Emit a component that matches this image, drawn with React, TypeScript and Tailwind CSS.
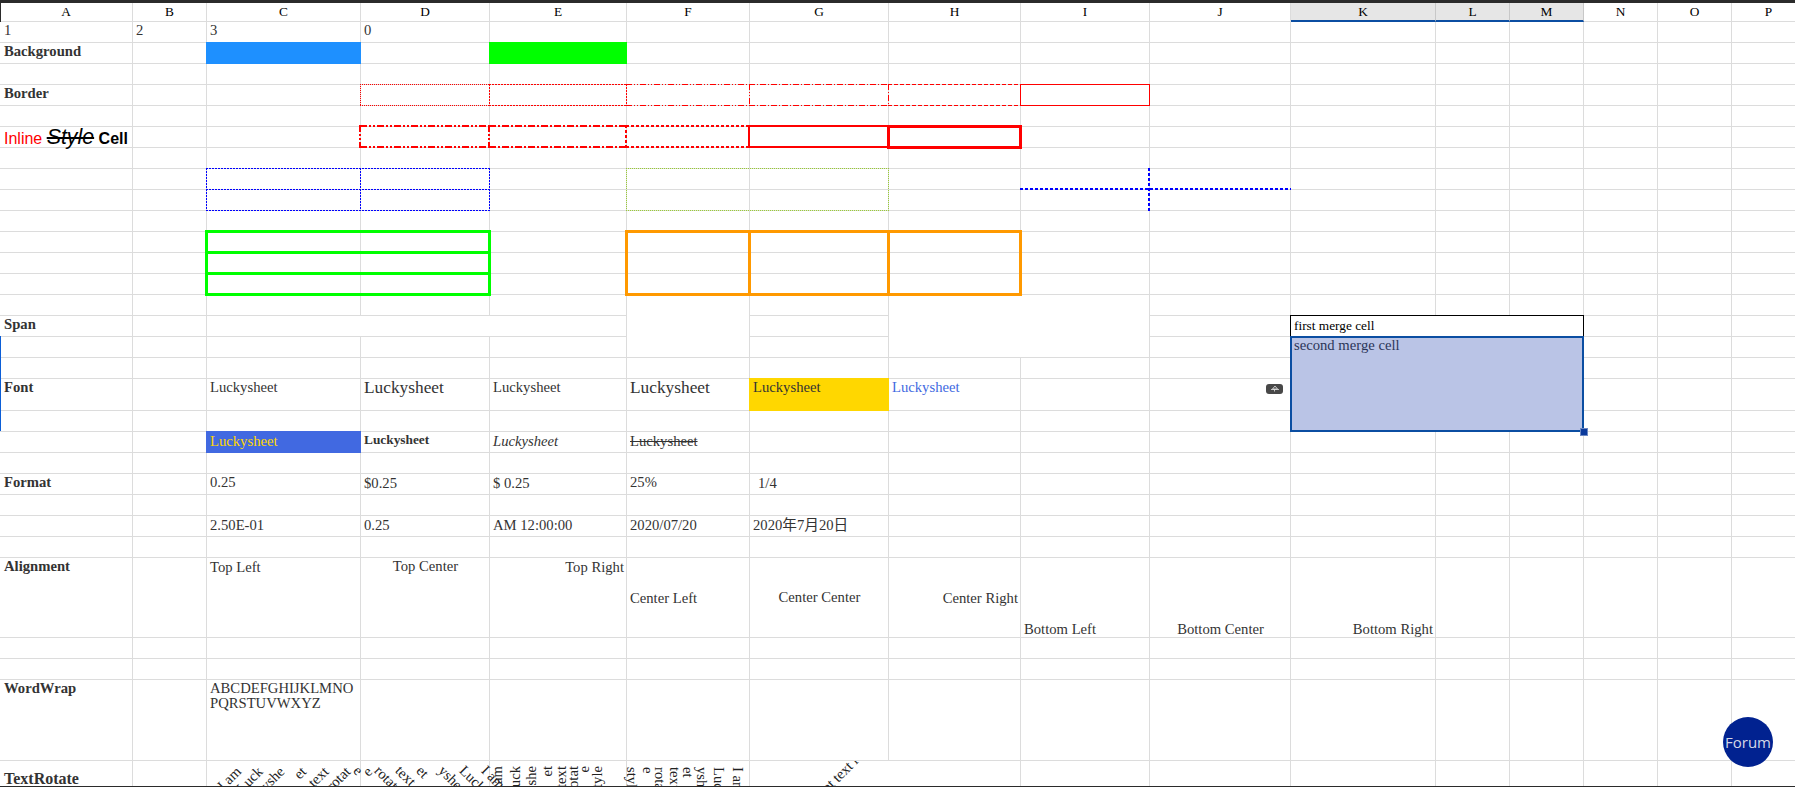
import type { ReactNode } from "react";

const columns = ["A", "B", "C", "D", "E", "F", "G", "H", "I", "J", "K", "L", "M", "N", "O", "P"];

type Cell = {
  text?: ReactNode;
  className?: string;
  fill?: string;
  span?: string;
  cols?: number;
  rowsDown?: number;
  bare?: boolean;
};

const Label = ({ children }: { children: ReactNode }) => <span className="font-bold">{children}</span>;

// rotated lines of the TextRotate row, placed by hand relative to their cell
const rotated = "absolute whitespace-nowrap leading-[16px] text-[#222]";

const cells: Record<string, Cell> = {
  A1: { text: "1" }, B1: { text: "2" }, C1: { text: "3" }, D1: { text: "0" },
  A2: { text: <Label>Background</Label> },
  C2: { fill: "bg-[#1e90ff]" },
  E2: { fill: "bg-[#00ff00]" },
  A4: { text: <Label>Border</Label> },
  A6: {
    className: "pt-[2px] font-['Liberation_Sans',sans-serif]",
    text: (
      <>
        <span className="text-[16px] text-[#ff0000]">Inline </span>
        <span className="text-[21.33px] italic text-black line-through">Style</span>
        <span className="text-[16px] font-bold text-black"> Cell</span>
      </>
    ),
  },
  A15: { text: <Label>Span</Label> },
  C15: { span: "col-span-3", cols: 3 },
  F14: { span: "row-span-3", rowsDown: 3 },
  H14: { span: "col-span-2 row-span-3", cols: 2, rowsDown: 3 },
  K15: { span: "col-span-3", cols: 3, className: "pt-[2px] text-[13.33px] text-black", text: "first merge cell" },
  K16: { span: "col-span-3 row-span-4", cols: 3, rowsDown: 4, text: "second merge cell" },
  A18: { text: <Label>Font</Label> },
  C18: { text: "Luckysheet" },
  D18: { className: "pt-[1px] text-[17.33px]", text: "Luckysheet" },
  E18: { text: "Luckysheet" },
  F18: { className: "pt-[1px] text-[17.33px]", text: "Luckysheet" },
  G18: { fill: "bg-[#ffd700]", text: "Luckysheet" },
  H18: { className: "text-[#4169e1]", text: "Luckysheet" },
  C20: { fill: "bg-[#4169e1]", className: "pt-[1px] text-[#ffd700]", text: "Luckysheet" },
  D20: { className: "text-[13.33px] font-bold", text: "Luckysheet" },
  E20: { className: "pt-[1px] italic", text: "Luckysheet" },
  F20: { className: "pt-[1px] line-through", text: "Luckysheet" },
  A22: { text: <Label>Format</Label> },
  C22: { text: "0.25" },
  D22: { className: "pt-[1px]", text: "$0.25" },
  E22: { className: "pt-[1px]", text: "$ 0.25" },
  F22: { text: "25%" },
  G22: { className: "pt-[1px] pl-[8px]", text: "1/4" },
  C24: { className: "pt-[1px]", text: "2.50E-01" },
  D24: { className: "pt-[1px]", text: "0.25" },
  E24: { className: "pt-[1px]", text: "AM 12:00:00" },
  F24: { className: "pt-[1px]", text: "2020/07/20" },
  G24: { className: "pt-[1px]", text: "2020年7月20日" },
  A26: { text: <Label>Alignment</Label> },
  C26: { className: "pt-[1px]", text: "Top Left" },
  D26: { className: "justify-center", text: "Top Center" },
  E26: { className: "pt-[1px] justify-end", text: "Top Right" },
  F26: { className: "items-center", text: "Center Left" },
  G26: { className: "items-center justify-center pb-[2px]", text: "Center Center" },
  H26: { className: "items-center justify-end", text: "Center Right" },
  I26: { className: "items-end", text: "Bottom Left" },
  J26: { className: "items-end justify-center", text: "Bottom Center" },
  K26: { className: "items-end justify-end", text: "Bottom Right" },
  A29: { text: <Label>WordWrap</Label> },
  C29: {
    className: "pt-[1px] leading-[15px]",
    text: (
      <>
        ABCDEFGHIJKLMNO
        <br />
        PQRSTUVWXYZ
      </>
    ),
  },
  A30: { className: "pt-[10px] text-[16px]", text: <Label>TextRotate</Label> },
  C30: {
    bare: true,
    text: (
      <>
        <span className={`${rotated} origin-right -rotate-45 right-[122px] top-0`}>I am</span>
        <span className={`${rotated} origin-right -rotate-45 right-[100px] top-0`}>Luck</span>
        <span className={`${rotated} origin-right -rotate-45 right-[78px] top-0`}>yshe</span>
        <span className={`${rotated} origin-right -rotate-45 right-[56px] top-0`}>et</span>
        <span className={`${rotated} origin-right -rotate-45 right-[34px] top-0`}>text</span>
        <span className={`${rotated} origin-right -rotate-45 right-[12px] top-0`}>rotat</span>
        <span className={`${rotated} origin-right -rotate-45 right-[-10px] top-0`}>e</span>
      </>
    ),
  },
  D30: {
    bare: true,
    text: (
      <>
        <span className={`${rotated} origin-left rotate-45 left-[123px] top-[-1px]`}>I am</span>
        <span className={`${rotated} origin-left rotate-45 left-[101px] top-[-1px]`}>Luck</span>
        <span className={`${rotated} origin-left rotate-45 left-[80px] top-[-1px]`}>yshe</span>
        <span className={`${rotated} origin-left rotate-45 left-[58px] top-[-1px]`}>et</span>
        <span className={`${rotated} origin-left rotate-45 left-[37px] top-[-1px]`}>text</span>
        <span className={`${rotated} origin-left rotate-45 left-[16px] top-[-1px]`}>rotat</span>
        <span className={`${rotated} origin-left rotate-45 left-[-5px] top-[-1px]`}>e</span>
      </>
    ),
  },
  E30: {
    bare: true,
    text: (
      <>
        <span className={`${rotated} origin-right -rotate-90 right-[129px] top-[-3px]`}>I am</span>
        <span className={`${rotated} origin-right -rotate-90 right-[111px] top-[-3px]`}>Luck</span>
        <span className={`${rotated} origin-right -rotate-90 right-[95px] top-[-3px]`}>yshe</span>
        <span className={`${rotated} origin-right -rotate-90 right-[79px] top-[-3px]`}>et</span>
        <span className={`${rotated} origin-right -rotate-90 right-[65px] top-[-3px]`}>text</span>
        <span className={`${rotated} origin-right -rotate-90 right-[53px] top-[-3px]`}>rotat</span>
        <span className={`${rotated} origin-right -rotate-90 right-[42px] top-[-3px]`}>e</span>
        <span className={`${rotated} origin-right -rotate-90 right-[29px] top-[-3px]`}>style</span>
      </>
    ),
  },
  F30: {
    bare: true,
    text: (
      <>
        <span className={`${rotated} origin-left rotate-90 left-[111px] top-[-2px]`}>I am</span>
        <span className={`${rotated} origin-left rotate-90 left-[92px] top-[-2px]`}>Luck</span>
        <span className={`${rotated} origin-left rotate-90 left-[75px] top-[-2px]`}>yshe</span>
        <span className={`${rotated} origin-left rotate-90 left-[61px] top-[-2px]`}>et</span>
        <span className={`${rotated} origin-left rotate-90 left-[48px] top-[-2px]`}>text</span>
        <span className={`${rotated} origin-left rotate-90 left-[33px] top-[-2px]`}>rotat</span>
        <span className={`${rotated} origin-left rotate-90 left-[21px] top-[-2px]`}>e</span>
        <span className={`${rotated} origin-left rotate-90 left-[5px] top-[-2px]`}>style</span>
      </>
    ),
  },
  G30: {
    span: "col-span-2",
    cols: 2,
    bare: true,
    text: (
      <div className="absolute inset-0 overflow-hidden">
        <span className={`${rotated} origin-left -rotate-45 left-[13px] top-[82px]`}>I am Luckysheet text rotate style</span>
      </div>
    ),
  },
};

// cells hidden by a merge
const covered = new Set<string>();
for (const [key, cell] of Object.entries(cells)) {
  const c = columns.indexOf(key[0]);
  const r = Number(key.slice(1));
  for (let y = 0; y < (cell.rowsDown ?? 1); y++) {
    for (let x = 0; x < (cell.cols ?? 1); x++) {
      if (x || y) covered.add(`${columns[c + x]}${r + y}`);
    }
  }
}

const rows = Array.from({ length: 30 }, (_, i) => i + 1);

// cell border styles of the sheet, drawn over the grid: [x1, y1, x2, y2]
type Stroke = { color: string; width: number; dash?: string; lines: number[][] };

const strokes: Stroke[] = [
  { color: "#ff0000", width: 1, dash: "1 1", lines: [[360, 84.5, 489, 84.5], [360, 105.5, 489, 105.5], [360.5, 84, 360.5, 106]] },
  { color: "#ff0000", width: 1, dash: "2 1", lines: [[489, 84.5, 626, 84.5], [489, 105.5, 626, 105.5], [489.5, 84, 489.5, 106], [626.5, 84, 626.5, 106]] },
  { color: "#ff0000", width: 1, dash: "6 2 1 2 1 2", lines: [[626, 84.5, 749, 84.5], [626, 105.5, 749, 105.5], [749.5, 84, 749.5, 106]] },
  { color: "#ff0000", width: 1, dash: "6 2 1 2", lines: [[749, 84.5, 888, 84.5], [749, 105.5, 888, 105.5], [888.5, 84, 888.5, 106]] },
  { color: "#ff0000", width: 1, dash: "4 2", lines: [[888, 84.5, 1020, 84.5], [888, 105.5, 1020, 105.5]] },
  { color: "#ff0000", width: 1, lines: [[1020, 84.5, 1150, 84.5], [1020, 105.5, 1150, 105.5], [1020.5, 84, 1020.5, 106], [1149.5, 84, 1149.5, 106]] },
  { color: "#ff0000", width: 2, dash: "7 2 2 2 2 2", lines: [[360, 126, 489, 126], [360, 147, 489, 147], [360, 125, 360, 148], [489, 125, 489, 148]] },
  { color: "#ff0000", width: 2, dash: "7 2 2 2", lines: [[489, 126, 626, 126], [489, 147, 626, 147]] },
  { color: "#ff0000", width: 2, dash: "3 2", lines: [[626, 126, 749, 126], [626, 147, 749, 147], [626, 125, 626, 148]] },
  { color: "#ff0000", width: 2, lines: [[749, 126, 888, 126], [749, 147, 888, 147], [749, 125, 749, 148]] },
  { color: "#ff0000", width: 3, lines: [[887, 126.5, 1022, 126.5], [887, 147.5, 1022, 147.5], [888.5, 125, 888.5, 149], [1020.5, 125, 1020.5, 149]] },
  { color: "#0000ff", width: 1, dash: "2 1", lines: [[206, 168.5, 490, 168.5], [206, 189.5, 490, 189.5], [206, 210.5, 490, 210.5], [206.5, 168, 206.5, 211], [360.5, 168, 360.5, 211], [489.5, 168, 489.5, 211]] },
  { color: "#9acd32", width: 1, dash: "1 1", lines: [[626, 168.5, 889, 168.5], [626, 210.5, 889, 210.5], [626.5, 168, 626.5, 211], [888.5, 168, 888.5, 211]] },
  { color: "#0000ff", width: 2, dash: "3 2", lines: [[1020, 189, 1291, 189], [1149, 168, 1149, 211]] },
  { color: "#00ff00", width: 3, lines: [[205, 231.5, 491, 231.5], [205, 252.5, 491, 252.5], [205, 273.5, 491, 273.5], [205, 294.5, 491, 294.5], [206.5, 230, 206.5, 296], [489.5, 230, 489.5, 296]] },
  { color: "#ff9900", width: 3, lines: [[625, 231.5, 1022, 231.5], [625, 294.5, 1022, 294.5], [626.5, 230, 626.5, 296], [749.5, 230, 749.5, 296], [888.5, 230, 888.5, 296], [1020.5, 230, 1020.5, 296]] },
  { color: "#000000", width: 1, lines: [[1290, 315.5, 1584, 315.5], [1290.5, 315, 1290.5, 336], [1583.5, 315, 1583.5, 336]] },
];

export default function App() {
  return (
    <div className="relative h-[787px] w-[1795px] overflow-hidden bg-white font-['Liberation_Serif','Noto_Sans_CJK_SC',serif] text-[14.67px] leading-[16px] text-[#333]">
      <div className="h-[3px] bg-[#2b2b2b]" />

      <div className="grid w-[1806px] grid-cols-[133px_74px_154px_129px_137px_123px_139px_132px_129px_141px_145px_74px_74px_74px_74px_74px] grid-rows-[19px_repeat(17,21px)_32px_repeat(7,21px)_80px_21px_21px_81px_40px]">
        {columns.map((c) => {
          const selected = c === "K" || c === "L" || c === "M";
          return (
            <div
              key={c}
              className={
                selected
                  ? "border-b-2 border-r border-b-[#0b4ea2] border-r-[#c8c8c8] bg-[#e6e6e6] text-center text-[13.33px] leading-[18px] text-black"
                  : "border-b border-r border-[#dcdcdc] text-center text-[13.33px] leading-[18px] text-black"
              }
            >
              {c}
            </div>
          );
        })}
        {rows.map((r) =>
          columns.map((c) => {
            const key = `${c}${r}`;
            if (covered.has(key)) return null;
            const cell = cells[key];
            return (
              <div
                key={key}
                className={`relative flex whitespace-nowrap border-b border-r border-[#dcdcdc] ${c === "A" ? "pl-[4px]" : "pl-[3px]"} pr-[2px] ${cell?.span ?? ""} ${cell?.className ?? ""}`}
              >
                {cell?.fill && <span className={`absolute -inset-px ${cell.fill}`} />}
                {cell?.bare ? cell.text : cell?.text !== undefined && <div className="relative">{cell.text}</div>}
              </div>
            );
          })
        )}
      </div>

      <svg className="pointer-events-none absolute left-0 top-0" width="1795" height="787" shapeRendering="crispEdges">
        {strokes.map((s, i) =>
          s.lines.map((l, j) => (
            <line key={`${i}-${j}`} x1={l[0]} y1={l[1]} x2={l[2]} y2={l[3]} stroke={s.color} strokeWidth={s.width} strokeDasharray={s.dash} />
          ))
        )}
      </svg>

      {/* selection over the second merged cell */}
      <div className="pointer-events-none absolute left-[1290px] top-[336px] h-[96px] w-[294px] border-2 border-[#0b4ea2] bg-[#193aac]/30">
        <span className="absolute -bottom-[6px] -right-[6px] size-[8px] border border-white/40 bg-[#0b3a9c]" />
      </div>

      <div className="absolute left-[1266px] top-[384px] flex h-[10px] w-[17px] items-center justify-center rounded-[3px] bg-[#484848]">
        <svg width="17" height="10" viewBox="0 0 17 10" fill="none" stroke="#e4e4e4" strokeWidth="0.8">
          <path d="M9 2L6.5 5h5zM5 5.5h8M8.5 5.5v2" />
        </svg>
      </div>

      {/* left edge marks */}
      <span className="absolute left-0 top-[3px] h-[19px] w-px bg-[#2b2b2b]" />
      <span className="absolute left-0 top-[336px] h-[95px] w-px bg-[#0b5ed7]" />
      <span className="absolute bottom-0 left-0 h-px w-full bg-[#2b2b2b]" />

      <div className="absolute left-[1723px] top-[717px] flex size-[50px] items-center justify-center rounded-full bg-[#012290] font-['Open_Sans',sans-serif] text-[15px] text-[#d5d9e8]">
        Forum
      </div>
    </div>
  );
}
